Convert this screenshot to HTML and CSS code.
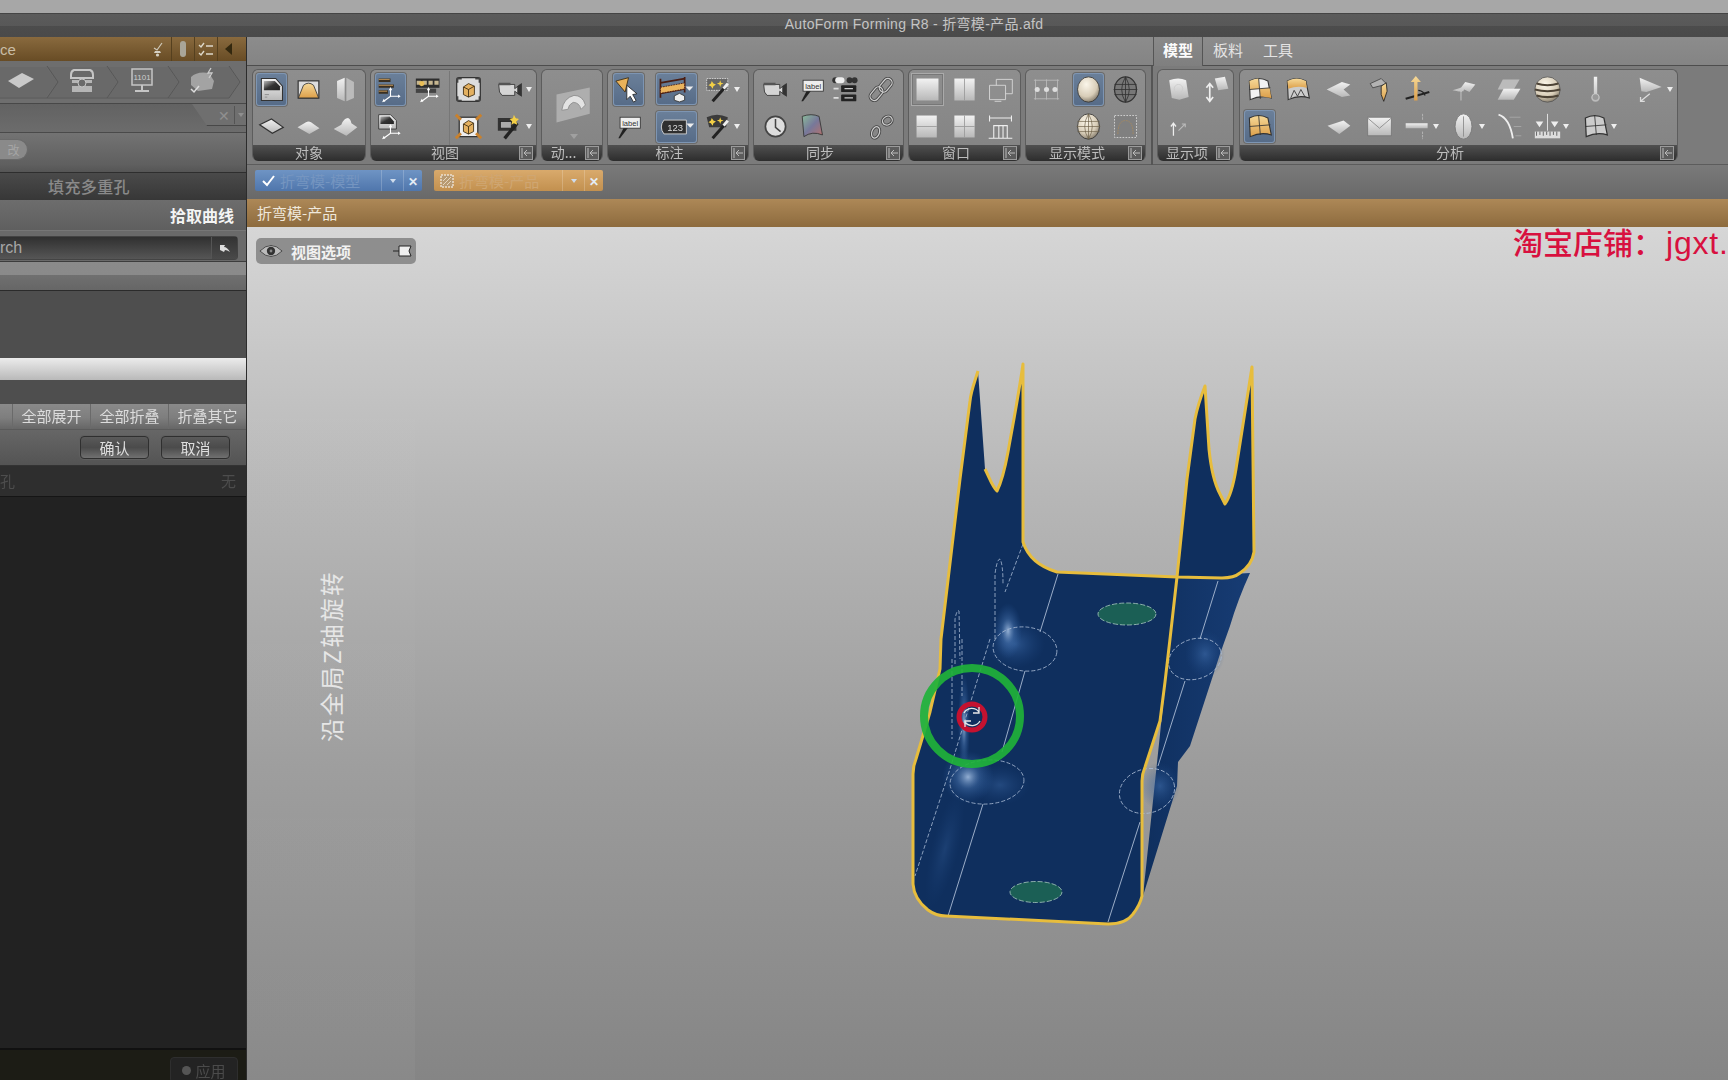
FILE: index.html
```html
<!DOCTYPE html>
<html lang="zh">
<head>
<meta charset="utf-8">
<title>AutoForm Forming R8</title>
<link rel="stylesheet" href="styles.css">
</head>
<body>
<svg class="defs" width="0" height="0" aria-hidden="true">
  <defs>
    <linearGradient id="gl" x1="0" y1="0" x2="0" y2="1"><stop offset="0" stop-color="#f2f2f2"/><stop offset="1" stop-color="#b8b8b8"/></linearGradient>
    <linearGradient id="gd" x1="0" y1="0" x2="1" y2="1"><stop offset="0" stop-color="#bbb"/><stop offset=".5" stop-color="#333"/><stop offset="1" stop-color="#222"/></linearGradient>
    <linearGradient id="go" x1="0" y1="0" x2="0" y2="1"><stop offset="0" stop-color="#f6d998"/><stop offset="1" stop-color="#dc9f4a"/></linearGradient>
    <linearGradient id="gk" x1="0" y1="0" x2="0" y2="1"><stop offset="0" stop-color="#666"/><stop offset="1" stop-color="#2a2a2a"/></linearGradient>
    <radialGradient id="gs" cx=".4" cy=".3" r=".8"><stop offset="0" stop-color="#fbf6ea"/><stop offset=".6" stop-color="#d8cdb8"/><stop offset="1" stop-color="#6d6455"/></radialGradient>
    <linearGradient id="gc" x1="0" y1="0" x2="1" y2="1"><stop offset="0" stop-color="#8bbd9a"/><stop offset=".5" stop-color="#77789a"/><stop offset="1" stop-color="#b8726a"/></linearGradient>

    <symbol id="sheet" viewBox="0 0 32 32"><path d="M4 3h17l8 9v17H4z" fill="url(#gl)" stroke="#333" stroke-width="1.2"/><path d="M7 6h13l6 6v5H7z" fill="url(#gd)"/><path d="M8 22h5M8 25h3" stroke="#888"/></symbol>
    <symbol id="die" viewBox="0 0 32 32"><rect x="3" y="5" width="26" height="22" fill="#3a3a3a"/><rect x="4.500" y="6.500" width="23" height="19" fill="#ddd"/><path d="M4 26l6-15q6-5 12 0l6 15z" fill="url(#go)" stroke="#333"/></symbol>
    <symbol id="book" viewBox="0 0 32 32"><path d="M15 2L6 6v20l9 4z" fill="url(#gl)"/><path d="M17 2l9 5v19l-9 4z" fill="#bbb"/></symbol>
    <symbol id="plate" viewBox="0 0 32 32"><path d="M2 14l14-7 14 10-13 7z" fill="url(#gl)" stroke="#333" stroke-width="1.400"/></symbol>
    <symbol id="dome" viewBox="0 0 32 32"><path d="M3 17l10-6q3-2 6 0l10 7-12 7z" fill="url(#gl)"/></symbol>
    <symbol id="hill" viewBox="0 0 32 32"><path d="M2 19l9-5q3-8 8-8 3 1 4 6l7 5-13 10z" fill="url(#gl)"/></symbol>
    <symbol id="axes" viewBox="0 0 32 32"><path d="M16 16v8M16 24l-8 6M16 24h10" fill="none" stroke="#fff" stroke-width="1.300"/><path d="M28 24l-3-2v4zM16 13l-2 4h4zM6 31l2-4 2 3z" fill="#fff"/></symbol>
    <symbol id="vcoord" viewBox="0 0 32 32"><path d="M2 3h14v4H2zM2 10h18v4H2zM2 17h11v4H2z" fill="#3a3022"/><path d="M2 4h13M2 11h17M2 18h10" stroke="#d7a45e"/><use href="#axes"/></symbol>
    <symbol id="vfilm" viewBox="0 0 32 32"><rect x="1" y="3" width="28" height="11" fill="#2d2d2d"/><path d="M2 8h26" stroke="#c6b690" stroke-width="5" stroke-dasharray="5 2"/><circle cx="8" cy="9" r="3" fill="#e8bd57"/><rect x="1" y="15" width="24" height="5" fill="#444"/><use href="#axes"/></symbol>
    <symbol id="vbox" viewBox="0 0 32 32"><rect x="2" y="2" width="28" height="28" rx="3" fill="#ddd" stroke="#333" stroke-width="1.500"/><path d="M10 13l6-4 7 3v10l-7 3-6-3z" fill="#e3b060" stroke="#3a2a10"/><path d="M16 16l7-4M16 16v9M16 16l-6-3" stroke="#3a2a10"/><path d="M3 8V3h5M24 3h5v5M3 24v5h5M24 29h5v-5" fill="none" stroke="#444" stroke-width="2"/></symbol>
    <symbol id="vboxo" viewBox="0 0 32 32"><rect x="5" y="5" width="22" height="23" fill="#eee" stroke="#333" stroke-width="1.500"/><path d="M10 13l6-4 6 3v10l-6 3-6-3z" fill="#e3b060" stroke="#3a2a10"/><path d="M16 16l6-4M16 16v9M16 16l-6-3" stroke="#3a2a10"/><path d="M1 2l6 6M31 2l-6 6M1 30l6-6M31 30l-6-6" stroke="#c9812c" stroke-width="3.500"/></symbol>
    <symbol id="cam" viewBox="0 0 32 32"><path d="M2 10h19v5l8-6v15l-8-6v5H6l-3-4z" fill="#d5d5d5" stroke="#333"/><path d="M2 8h14v3H2z" fill="#555"/><path d="M24 12l5-3v15l-5-3z" fill="#333"/></symbol>
    <symbol id="vsheet" viewBox="0 0 32 32"><path d="M2 2h14l7 7v10H2z" fill="url(#gl)" stroke="#333"/><path d="M4 4h11l5 6v3H4z" fill="url(#gd)"/><use href="#axes"/></symbol>
    <symbol id="camw" viewBox="0 0 32 32"><path d="M1 6h22v15H1z" fill="#333"/><rect x="4" y="10" width="13" height="8" fill="#aaa" stroke="#222"/><path d="M9 30L24 12" stroke="#222" stroke-width="4"/><path d="M20 2l2 4 4 1-3 3 1 4-4-2-3 2 1-4-3-3 4-1z" fill="#f3cf46"/></symbol>
    <symbol id="anim" viewBox="0 0 48 48"><path d="M4 12l38-8v30L4 44z" fill="#aeaeae"/><path d="M10 30q2-14 14-17 10 0 13 11l-5 5q-2-8-9-8-5 2-6 8z" fill="#e3e3e3" stroke="#8d8d8d"/></symbol>
    <symbol id="cursor" viewBox="0 0 32 32"><path d="M1 6l15-4-4 17z" fill="#e9b25a" stroke="#3a2a10"/><path d="M14 11v17l4-4 4 7 3-2-4-7 5-1z" fill="#fff" stroke="#222"/></symbol>
    <symbol id="lab" viewBox="0 0 32 32"><rect x="6" y="5" width="24" height="13" fill="#eee" stroke="#333"/><path d="M10 18L4 30l2 0 9-12z" fill="#222"/><text x="18" y="15" font-size="9" text-anchor="middle" font-family="Liberation Sans" fill="#333">label</text></symbol>
    <symbol id="ladder" viewBox="0 0 44 32"><path d="M4 4v22M32 2v18M4 9l28-5M4 21l28-5" stroke="#4a1d12" stroke-width="2" fill="none"/><path d="M4 14l28-5v7L4 21z" fill="#ebb45e" stroke="#4a1d12" stroke-dasharray="2 1"/><path d="M20 24l6-3 6 3v5l-6 2-6-2z" fill="#eee" stroke="#333"/><path d="M33 13h9l-4.500 5z" fill="#eee"/></symbol>
    <symbol id="n123" viewBox="0 0 44 32"><path d="M8 8h26v16H8q-6-8 0-16z" fill="#2f2f2f" stroke="#ddd"/><text x="21" y="21" font-size="11" text-anchor="middle" font-family="Liberation Sans" fill="#ddd">123</text><path d="M34 12h9l-4.500 5z" fill="#eee"/></symbol>
    <symbol id="wand" viewBox="0 0 32 32"><rect x="2" y="3" width="25" height="14" fill="#666" stroke="#ddd" stroke-dasharray="2 1"/><path d="M8 6l2 3 3 1-3 2-1 3-2-3-3-1 3-2zM18 5l1 3 3 1-3 1-1 3-1-3-3-1 3-1z" fill="#f3cf46"/><path d="M9 30l15-17" stroke="#222" stroke-width="3.500"/><path d="M22 15l5-6" stroke="#eee" stroke-width="3.500"/></symbol>
    <symbol id="wand2" viewBox="0 0 32 32"><path d="M2 5q12-6 25 0l-2 12H5z" fill="#3a3a3a"/><path d="M8 6l2 3 3 1-3 2-1 3-2-3-3-1 3-2zM18 5l1 3 3 1-3 1-1 3-1-3-3-1 3-1z" fill="#f3cf46"/><path d="M9 30l15-17" stroke="#222" stroke-width="3.500"/><path d="M22 15l5-6" stroke="#eee" stroke-width="3.500"/></symbol>
    <symbol id="tog" viewBox="0 0 32 32"><circle cx="5" cy="5" r="3.500" fill="#333"/><rect x="5" y="1.500" width="11" height="7" rx="3.500" fill="#eee"/><circle cx="22" cy="5" r="3.500" fill="#333"/><circle cx="28" cy="5" r="3.500" fill="#333"/><rect x="12" y="11" width="18" height="8" rx="1" fill="#222"/><rect x="12" y="22" width="18" height="8" rx="1" fill="#222"/><path d="M3 15h6M3 26h6" stroke="#ddd" stroke-width="2"/><path d="M16 15h10M16 26h10" stroke="#ccc" stroke-width="1.500"/></symbol>
    <symbol id="chain" viewBox="0 0 32 32"><g fill="none"><rect x="-5" y="-9" width="10" height="18" rx="5" transform="translate(10 21) rotate(40)" stroke="#444" stroke-width="3.500"/><rect x="-5" y="-9" width="10" height="18" rx="5" transform="translate(21 11) rotate(40)" stroke="#444" stroke-width="3.500"/><rect x="-5" y="-9" width="10" height="18" rx="5" transform="translate(10 21) rotate(40)" stroke="#ccc" stroke-width="1.500"/><rect x="-5" y="-9" width="10" height="18" rx="5" transform="translate(21 11) rotate(40)" stroke="#ccc" stroke-width="1.500"/></g></symbol>
    <symbol id="chainb" viewBox="0 0 32 32"><g fill="none"><ellipse cx="9" cy="23" rx="4.500" ry="7" transform="rotate(20 9 23)" stroke="#444" stroke-width="3.500"/><ellipse cx="23" cy="9" rx="6" ry="5" transform="rotate(-30 23 9)" stroke="#444" stroke-width="3.500"/><ellipse cx="9" cy="23" rx="4.500" ry="7" transform="rotate(20 9 23)" stroke="#ccc" stroke-width="1.500"/><ellipse cx="23" cy="9" rx="6" ry="5" transform="rotate(-30 23 9)" stroke="#ccc" stroke-width="1.500"/></g></symbol>
    <symbol id="clock" viewBox="0 0 32 32"><circle cx="16" cy="16" r="12" fill="#ddd" stroke="#444" stroke-width="2"/><path d="M16 7v10l6 5" fill="none" stroke="#444" stroke-width="1.800"/></symbol>
    <symbol id="csheet" viewBox="0 0 32 32"><path d="M5 4q11-4 20 0l4 22q-12-5-22 2z" fill="url(#gc)" stroke="#333"/></symbol>
    <symbol id="w1" viewBox="0 0 32 32"><rect x="3" y="3" width="26" height="26" fill="url(#gl)"/></symbol>
    <symbol id="w2" viewBox="0 0 32 32"><rect x="4" y="3" width="24" height="26" fill="url(#gl)"/><path d="M16 3v26" stroke="#999"/></symbol>
    <symbol id="w3" viewBox="0 0 32 32"><rect x="3" y="3" width="24" height="26" fill="url(#gl)"/><path d="M3 16h24" stroke="#999"/></symbol>
    <symbol id="w4" viewBox="0 0 32 32"><rect x="4" y="3" width="24" height="26" fill="url(#gl)"/><path d="M16 3v26M4 16h24" stroke="#999"/></symbol>
    <symbol id="wm" viewBox="0 0 32 32"><path d="M11 4h19v17H11z" fill="none" stroke="#ddd"/><path d="M3 11h19v17H3z" fill="#8e8e8e" stroke="#ddd"/><path d="M9 30h8" stroke="#ddd"/></symbol>
    <symbol id="wdim" viewBox="0 0 32 32"><path d="M3 3v7M29 3v7M3 6h26M8 30V15h16v15M14 15v15M19 15v15M2 30h28" fill="none" stroke="#eee" stroke-width="1.300"/></symbol>
    <symbol id="beads" viewBox="0 0 32 32"><path d="M3 4v24M16 4v24M29 4v24M1 5h30M1 27h30" stroke="#bbb" fill="none"/><circle cx="5" cy="16" r="3" fill="#ddd"/><circle cx="16" cy="16" r="3" fill="#ddd"/><circle cx="26" cy="16" r="3" fill="#ddd"/></symbol>
    <symbol id="ball" viewBox="0 0 32 32"><ellipse cx="16" cy="16" rx="13" ry="15" fill="url(#gs)" stroke="#333"/></symbol>
    <symbol id="ballw" viewBox="0 0 32 32"><ellipse cx="16" cy="16" rx="13" ry="15" fill="#777" stroke="#333" stroke-width="1.500"/><path d="M3 10h26M2 16h28M3 22h26M16 1v30M16 1q-9 15 0 30M16 1q9 15 0 30" fill="none" stroke="#333"/></symbol>
    <symbol id="ballf" viewBox="0 0 32 32"><ellipse cx="16" cy="16" rx="13" ry="15" fill="url(#gs)" stroke="#333"/><path d="M3 10h26M2 16h28M3 22h26M16 1v30M16 1q-9 15 0 30M16 1q9 15 0 30" fill="none" stroke="#6d5f48" stroke-width=".8"/></symbol>
    <symbol id="dots" viewBox="0 0 32 32"><rect x="3" y="3" width="26" height="26" fill="#808080" stroke="#ddd" stroke-dasharray="2 1.500"/><path d="M7 25q0-16 9-16t9 16" fill="none" stroke="#a98a5c" stroke-dasharray="2 1"/></symbol>
    <symbol id="page" viewBox="0 0 32 32"><path d="M5 5q11-4 20 0l3 20-11 3-9-2z" fill="url(#gl)"/><circle cx="16" cy="15" r="5" fill="none" stroke="#ccc"/></symbol>
    <symbol id="updown" viewBox="0 0 32 32"><path d="M14 3l12-2 4 14-12 2z" fill="url(#gl)"/><path d="M8 10v19M4 14l4-5 4 5M4 25l4 5 4-5" fill="none" stroke="#eee" stroke-width="2"/></symbol>
    <symbol id="arrs" viewBox="0 0 32 32"><path d="M10 27V13M7 16l3-4 3 4" fill="none" stroke="#eee" stroke-width="1.500"/><path d="M16 21l8-8M20 13h4v4" fill="none" stroke="#bbb" stroke-width="1.300"/></symbol>
    <symbol id="pat1" viewBox="0 0 32 32"><path d="M4 6q11-6 22 0l4 20q-12-4-25 2z" fill="#f2f2f2" stroke="#333" stroke-width="1.300"/><path d="M4 6q6-3 11-3l1 12-11 1zM16 15l12-1 2 12-13-2z" fill="url(#go)"/><path d="M15 3l2 24M4 16l25-2" stroke="#333"/></symbol>
    <symbol id="pat2" viewBox="0 0 32 32"><path d="M4 6q11-6 22 0l4 20q-12-4-25 2z" fill="#ccc" stroke="#333" stroke-width="1.300"/><path d="M4 6q11-6 22 0l1 8q-11-3-22 1z" fill="url(#go)"/><path d="M8 26l4-9 4 7 4-8 5 9" fill="none" stroke="#333"/></symbol>
    <symbol id="pat3" viewBox="0 0 32 32"><path d="M4 6q11-6 22 0l4 20q-12-4-25 2z" fill="url(#go)" stroke="#333" stroke-width="1.300"/><path d="M15 3l2 23M4 16l25-2" stroke="#333"/></symbol>
    <symbol id="fold" viewBox="0 0 32 32"><path d="M2 16L20 7l10 3-8 6 8 7-10 2z" fill="url(#gl)"/></symbol>
    <symbol id="flat" viewBox="0 0 32 32"><path d="M3 15l19-6 8 6-13 10z" fill="url(#gl)"/></symbol>
    <symbol id="bend" viewBox="0 0 32 32"><path d="M5 9L18 3l5 5v2L8 14z" fill="#b3b3b3" stroke="#444"/><path d="M18 12l6-4 1 10-4 12-3-8z" fill="url(#go)" stroke="#222"/></symbol>
    <symbol id="angle" viewBox="0 0 32 32"><path d="M2 27L30 19" stroke="#222" stroke-width="2.500"/><path d="M12 7l-4 0 6-7 6 7h-4v22h-4z" fill="url(#go)"/><path d="M17 17a10 10 0 0 1 8 6" fill="none" stroke="#222" stroke-width="1.500"/></symbol>
    <symbol id="sarrow" viewBox="0 0 32 32"><path d="M3 17l10-3 5-7 12 3-7 9-6-3-3 3z" fill="url(#gl)"/><path d="M13 29V15M10 18l3-4 3 4" stroke="#ccc" fill="none"/></symbol>
    <symbol id="slay" viewBox="0 0 32 32"><path d="M8 4h20l-7 12H2z" fill="#bbb"/><path d="M9 15h20l-8 13H2z" fill="url(#gl)"/></symbol>
    <symbol id="stripe" viewBox="0 0 32 32"><ellipse cx="16" cy="16" rx="15" ry="15" fill="url(#gs)" stroke="#555"/><path d="M3 9q13 4 26 0M1 16q15 4 30 0M3 23q13 4 26 0" fill="none" stroke="#4d4336" stroke-width="2.500"/></symbol>
    <symbol id="thermo" viewBox="0 0 32 32"><path d="M14 1h4v20a5 5 0 1 1-4 0z" fill="url(#gl)"/><circle cx="16" cy="25" r="3.500" fill="#999"/></symbol>
    <symbol id="flagd" viewBox="0 0 32 32"><path d="M2 2l26 11-18 6-6-1z" fill="url(#gl)"/><path d="M14 21L3 30M3 25v5h5" stroke="#ddd" fill="none" stroke-width="1.500"/></symbol>
    <symbol id="mail" viewBox="0 0 32 32"><rect x="2" y="5" width="28" height="22" fill="url(#gl)" stroke="#777"/><path d="M2 6l14 12L30 6" fill="none" stroke="#888"/></symbol>
    <symbol id="sect" viewBox="0 0 32 32"><path d="M2 12h26v6H2z" fill="url(#gl)"/><path d="M2 20h26" stroke="#888"/><path d="M22 1v8M22 22v9" stroke="#bbb" stroke-dasharray="3 1"/></symbol>
    <symbol id="oval" viewBox="0 0 32 32"><ellipse cx="16" cy="16" rx="10" ry="15" fill="url(#gl)" stroke="#777"/><path d="M16 4v24" stroke="#888"/></symbol>
    <symbol id="curve" viewBox="0 0 32 32"><path d="M3 2q13 4 17 28" fill="none" stroke="#eee" stroke-width="2.200"/><path d="M16 5h13M21 16h9M23 27h7" stroke="#aaa"/></symbol>
    <symbol id="ruler" viewBox="0 0 32 32"><rect x="1" y="22" width="30" height="8" fill="#ddd"/><path d="M3 22v5M7 22v4M11 22v5M15 22v4M19 22v5M23 22v4M27 22v5" stroke="#555"/><path d="M2 10h9l-4.500 7zM20 10h9l-4.500 7z" fill="#eee"/><path d="M16 1v20" stroke="#eee"/></symbol>
    <symbol id="gridp" viewBox="0 0 32 32"><path d="M4 6q11-6 22 0l4 20q-12-4-25 2z" fill="#ccc" stroke="#333" stroke-width="1.500"/><path d="M15 3l2 23M4 16l25-2" stroke="#333"/></symbol>

    <symbol id="exp" viewBox="0 0 14 14"><rect x=".5" y=".5" width="13" height="13" fill="#5c5c5c" stroke="#9a9a9a"/><path d="M12 7H6M8 4L5 7l3 3M3 2v10" fill="none" stroke="#bbb"/></symbol>
    <symbol id="eye" viewBox="0 0 26 16"><path d="M1 8q12-12 24 0q-12 12-24 0z" fill="#bbb" stroke="#444"/><circle cx="13" cy="8" r="4.500" fill="#333"/><circle cx="13" cy="8" r="1.500" fill="#888"/></symbol>
    <symbol id="pin" viewBox="0 0 20 14"><path d="M1 7h6" stroke="#222"/><path d="M7 2h12l-2 5 2 5H7z" fill="#eee" stroke="#222"/></symbol>
  </defs>
</svg>

<div class="app">
  <div class="strip"></div>
  <header class="title">AutoForm Forming R8 - 折弯模-产品.afd</header>
  <div class="work">
    <aside class="left">
      <div class="lhead">
        <span class="lhead-t">ce</span>
        <span class="lh-tools">
          <svg class="lh-i" viewBox="0 0 16 16"><path d="M4 7l3 2 5-7" stroke="#cfc9ba" fill="none" stroke-width="1.200"/><path d="M5 10h5l1 2H4z" fill="#d5d0c3"/><circle cx="7.500" cy="14" r="1.600" fill="#d5d0c3"/></svg>
          <span class="lh-cell"><svg class="lh-g" viewBox="0 0 16 16"><rect x="5" y="0" width="6" height="16" rx="3" fill="#a9a598"/></svg></span>
          <span class="lh-cell"><svg class="lh-g" viewBox="0 0 16 16"><path d="M1 4l2 2 3-4M1 12l2 2 3-4M8 5h7M8 13h7" stroke="#ddd8ca" fill="none" stroke-width="1.400"/></svg></span>
          <span class="lh-cell"><svg class="lh-g" viewBox="0 0 16 16"><path d="M11 2L4 8l7 6z" fill="#33280f"/></svg></span>
        </span>
      </div>
      <div class="crumbs">
        <svg class="crumb-svg" viewBox="0 0 247 35">
          <path d="M-2 2h48l11 15-11 15H-2z" fill="#696969"/>
          <path d="M47 2h60l10 15-10 15H47l10-15z" fill="#696969"/>
          <path d="M108 2h60l10 15-10 15h-60l10-15z" fill="#696969"/>
          <path d="M169 2h60l10 15-10 15h-60l10-15z" fill="#696969"/>
          <path d="M47 1l11 16-11 16M107 1l11 16-11 16M168 1l11 16-11 16M229 1l11 16-11 16" fill="none" stroke="#575757"/>
          <path d="M-2 33H229" stroke="#595959"/>
          <path d="M8 16l14-8 12 6-15 9z" fill="#c9c9c9"/>
          <path d="M74 5h16q3 1 3 5v3H71v-3q0-4 3-5z" fill="none" stroke="#c5c5c5" stroke-width="2"/><path d="M72 15h20v3H72zM72 21h20v6H72z" fill="#b5b5b5"/><circle cx="82" cy="18" r="4" fill="#6a6a6a" stroke="#c5c5c5"/>
          <rect x="132" y="4" width="20" height="16" fill="#6f6f6f" stroke="#c5c5c5" stroke-width="1.500"/><path d="M135 26h14M142 20v5" stroke="#c5c5c5" stroke-width="2"/><text x="142" y="15" font-size="8" text-anchor="middle" font-family="Liberation Sans" fill="#ccc">1101</text>
          <path d="M191 12q6-6 18-4l5 8-2 8-14 2-7-6z" fill="#a3a3a3"/><path d="M211 3l-3 5h4l-3 5" stroke="#ccc" fill="none" stroke-width="1.300"/><path d="M191 24l3 3 5-6" stroke="#ddd" fill="none" stroke-width="1.500"/>
        </svg>
      </div>
      <div class="xrow">
        <span class="xtab"><span class="xtab-x">✕</span><span class="xtab-c"></span></span>
      </div>
      <div class="pillrow"><span class="pill">改</span></div>
      <div class="drow">填充多重孔</div>
      <div class="pick">拾取曲线</div>
      <div class="searchrow">
        <div class="search"><span class="search-t">rch</span>
          <span class="search-b"><svg class="search-i" viewBox="0 0 14 12"><path d="M2 8V3h5L6 5q3 0 6 5-3-2-5-2l-1 2z" fill="#ddd"/></svg></span>
        </div>
      </div>
      <div class="listhead"></div>
      <div class="lgap1"></div>
      <div class="lwhite"></div>
      <div class="lgap2"></div>
      <div class="ltabs">
        <span class="lt lt0"></span><span class="lt">全部展开</span><span class="lt">全部折叠</span><span class="lt">折叠其它</span>
      </div>
      <div class="lbtns"><button class="btn">确认</button><button class="btn">取消</button></div>
      <div class="lnone"><span>孔</span><span>无</span></div>
      <div class="lblack"></div>
      <div class="lbottom"><span class="apply"><i class="dot"></i>应用</span></div>
    </aside>

    <main class="right">
      <div class="tabstrip">
        <span class="rt rt-on">模型</span><span class="rt">板料</span><span class="rt">工具</span>
      </div>
      <div class="ribbon">
        <section class="grp g1">
          <div class="body">
            <span class="ic on"><svg class="i"><use href="#sheet"/></svg></span>
            <span class="ic"><svg class="i"><use href="#die"/></svg></span>
            <span class="ic"><svg class="i"><use href="#book"/></svg></span>
            <span class="ic"><svg class="i"><use href="#plate"/></svg></span>
            <span class="ic"><svg class="i"><use href="#dome"/></svg></span>
            <span class="ic"><svg class="i"><use href="#hill"/></svg></span>
          </div>
          <div class="lbl"><span>对象</span></div>
        </section>
        <section class="grp g2">
          <div class="body">
            <span class="ic on"><svg class="i"><use href="#vcoord"/></svg></span>
            <span class="ic"><svg class="i"><use href="#vfilm"/></svg></span>
            <span class="sep r2"></span>
            <span class="ic"><svg class="i"><use href="#vbox"/></svg></span>
            <span class="ic dd"><svg class="i"><use href="#cam"/></svg></span>
            <span class="ic"><svg class="i"><use href="#vsheet"/></svg></span>
            <span></span>
            <span class="ic"><svg class="i"><use href="#vboxo"/></svg></span>
            <span class="ic dd"><svg class="i"><use href="#camw"/></svg></span>
          </div>
          <div class="lbl xp"><span>视图</span><svg class="exp"><use href="#exp"/></svg></div>
        </section>
        <section class="grp g3">
          <div class="body anim"><svg class="i-big"><use href="#anim"/></svg><i class="caret dim"></i></div>
          <div class="lbl xp"><span>动...</span><svg class="exp"><use href="#exp"/></svg></div>
        </section>
        <section class="grp g4">
          <div class="body">
            <span class="ic on"><svg class="i"><use href="#cursor"/></svg></span>
            <span class="ic on wide"><svg class="iw"><use href="#ladder"/></svg></span>
            <span class="ic dd"><svg class="i"><use href="#wand"/></svg></span>
            <span class="ic"><svg class="i"><use href="#lab"/></svg></span>
            <span class="ic on wide"><svg class="iw"><use href="#n123"/></svg></span>
            <span class="ic dd"><svg class="i"><use href="#wand2"/></svg></span>
          </div>
          <div class="lbl xp"><span>标注</span><svg class="exp"><use href="#exp"/></svg></div>
        </section>
        <section class="grp g5">
          <div class="body">
            <span class="ic"><svg class="i"><use href="#cam"/></svg></span>
            <span class="ic"><svg class="i"><use href="#lab"/></svg></span>
            <span class="ic"><svg class="i"><use href="#tog"/></svg></span>
            <span class="ic"><svg class="i"><use href="#chain"/></svg></span>
            <span class="ic"><svg class="i"><use href="#clock"/></svg></span>
            <span class="ic"><svg class="i"><use href="#csheet"/></svg></span>
            <span></span>
            <span class="ic"><svg class="i"><use href="#chainb"/></svg></span>
          </div>
          <div class="lbl xp"><span>同步</span><svg class="exp"><use href="#exp"/></svg></div>
        </section>
        <section class="grp g6">
          <div class="body">
            <span class="ic frame"><svg class="i"><use href="#w1"/></svg></span>
            <span class="ic"><svg class="i"><use href="#w2"/></svg></span>
            <span class="ic"><svg class="i"><use href="#wm"/></svg></span>
            <span class="ic"><svg class="i"><use href="#w3"/></svg></span>
            <span class="ic"><svg class="i"><use href="#w4"/></svg></span>
            <span class="ic"><svg class="i"><use href="#wdim"/></svg></span>
          </div>
          <div class="lbl xp"><span>窗口</span><svg class="exp"><use href="#exp"/></svg></div>
        </section>
        <section class="grp g7">
          <div class="body">
            <span class="ic"><svg class="i"><use href="#beads"/></svg></span>
            <span class="ic on"><svg class="i"><use href="#ball"/></svg></span>
            <span class="ic"><svg class="i"><use href="#ballw"/></svg></span>
            <span></span>
            <span class="ic"><svg class="i"><use href="#ballf"/></svg></span>
            <span class="ic"><svg class="i"><use href="#dots"/></svg></span>
          </div>
          <div class="lbl xp"><span>显示模式</span><svg class="exp"><use href="#exp"/></svg></div>
        </section>
        <div class="rsep"></div>
        <section class="grp g8">
          <div class="body">
            <span class="ic"><svg class="i"><use href="#page"/></svg></span>
            <span class="ic"><svg class="i"><use href="#updown"/></svg></span>
            <span class="ic"><svg class="i"><use href="#arrs"/></svg></span>
          </div>
          <div class="lbl xp"><span>显示项</span><svg class="exp"><use href="#exp"/></svg></div>
        </section>
        <section class="grp g9">
          <div class="body">
            <span class="ic"><svg class="i"><use href="#pat1"/></svg></span>
            <span class="ic"><svg class="i"><use href="#pat2"/></svg></span>
            <span class="ic"><svg class="i"><use href="#fold"/></svg></span>
            <span class="ic"><svg class="i"><use href="#bend"/></svg></span>
            <span class="ic"><svg class="i"><use href="#angle"/></svg></span>
            <span class="ic"><svg class="i"><use href="#sarrow"/></svg></span>
            <span class="ic"><svg class="i"><use href="#slay"/></svg></span>
            <span class="ic"><svg class="i"><use href="#stripe"/></svg></span>
            <span class="ic"><svg class="i"><use href="#thermo"/></svg></span>
            <span class="ic dd"><svg class="i"><use href="#flagd"/></svg></span>
            <span class="ic on"><svg class="i"><use href="#pat3"/></svg></span>
            <span></span>
            <span class="ic"><svg class="i"><use href="#flat"/></svg></span>
            <span class="ic"><svg class="i"><use href="#mail"/></svg></span>
            <span class="ic dd"><svg class="i"><use href="#sect"/></svg></span>
            <span class="ic dd"><svg class="i"><use href="#oval"/></svg></span>
            <span class="ic"><svg class="i"><use href="#curve"/></svg></span>
            <span class="ic dd"><svg class="i"><use href="#ruler"/></svg></span>
            <span class="ic dd"><svg class="i"><use href="#gridp"/></svg></span>
            <span></span>
          </div>
          <div class="lbl xp"><span>分析</span><svg class="exp"><use href="#exp"/></svg></div>
        </section>
      </div>
      <div class="doctabs">
        <span class="dt dt-b"><svg class="dt-i" viewBox="0 0 14 14"><path d="M2 7l4 4 7-9" fill="none" stroke="#fff" stroke-width="2"/></svg><span class="dt-t">折弯模-模型</span><i class="dt-c"></i><span class="dt-x">✕</span></span>
        <span class="dt dt-o"><svg class="dt-i" viewBox="0 0 14 14"><rect x="1" y="1" width="12" height="12" fill="#b89a72" stroke="#fff" stroke-dasharray="2 1"/><path d="M3 11l8-8M3 7l4-4M7 11l4-4" stroke="#e5d6bd"/></svg><span class="dt-t">折弯模-产品</span><i class="dt-c"></i><span class="dt-x">✕</span></span>
      </div>
      <div class="vhead">折弯模-产品</div>
      <div class="viewport">
        <div class="vstrip">
          <div class="vopts"><svg class="vo-eye"><use href="#eye"/></svg><span class="vo-t">视图选项</span><svg class="vo-pin"><use href="#pin"/></svg></div>
        </div>
        <div class="vtext">沿全局Z轴旋转</div>
        <div class="shop">淘宝店铺：<span class="shop-l">jgxt.taobao.com</span></div>
        <svg class="part" viewBox="247 228 1481 852">
          <defs>
            <radialGradient id="hl"><stop offset="0" stop-color="#a9c4e6" stop-opacity=".85"/><stop offset=".45" stop-color="#4b78b4" stop-opacity=".45"/><stop offset="1" stop-color="#2a5a9c" stop-opacity="0"/></radialGradient>
            <radialGradient id="hs"><stop offset="0" stop-color="#3f6dab" stop-opacity=".6"/><stop offset="1" stop-color="#1f4a86" stop-opacity="0"/></radialGradient>
            <linearGradient id="fl" x1="0" y1="0" x2="1" y2="0"><stop offset="0" stop-color="#0f2f5e"/><stop offset="1" stop-color="#173c74"/></linearGradient>
          </defs>
          <path fill="url(#fl)" d="M1170 640L1177 578 1250 574Q1238 600 1230 627L1220 655 1190 747 1178 763 1177 787 1143 897z"/>
          <path class="blue" d="M978 372C974 385 971 392 970 402L960 480 941 640 940 670 930 713 916 760Q913 767 913 775L913 885Q914 900 928 911 936 917 946 917L1108 925Q1126 925 1133 915 1140 906 1142 897L1142 782Q1142 775 1145 768L1160 722 1165 683 1170 640 1177 578 1057 573Q1030 565 1023 543L1023 365C1018 400 1012 430 1008 453 1003 480 997 492 997 492 992 487 990 480 985 470 983 445 981 420z"/>
          <path class="blue" d="M1177 578L1187 480 1195 420Q1198 405 1205 387L1209 450Q1212 480 1220 495L1225 505Q1232 495 1236 470L1252 368 1254 553Q1252 566 1240 574 1234 579 1222 579z"/>
          <ellipse cx="1015" cy="645" rx="30" ry="24" fill="url(#hs)"/>
          <ellipse cx="1008" cy="632" rx="14" ry="28" fill="url(#hl)"/>
          <ellipse cx="968" cy="778" rx="26" ry="26" fill="url(#hl)"/>
          <ellipse cx="964" cy="725" rx="6" ry="50" fill="url(#hl)"/>
          <ellipse cx="1000" cy="786" rx="30" ry="20" fill="url(#hs)" opacity=".7"/>
          <ellipse cx="1160" cy="787" rx="20" ry="24" fill="url(#hs)"/>
          <ellipse cx="1205" cy="655" rx="20" ry="24" fill="url(#hs)"/>
          <ellipse cx="945" cy="850" rx="14" ry="60" fill="url(#hs)" opacity=".45" transform="rotate(14 945 850)"/>
          <ellipse cx="1127" cy="615" rx="29" ry="11" class="hole"/>
          <ellipse cx="1036" cy="893" rx="26" ry="10.500" class="hole"/>
          <g class="ln">
            <path d="M1058 575L1040 633M1025 672L1002 753M983 805L948 917M1218 582L1200 640M1185 682L1158 767M1140 823L1108 923"/>
          </g>
          <g class="dash">
            <path d="M1023 545L1005 593M990 640L950 770 915 877"/>
            <ellipse cx="1025" cy="650" rx="32" ry="22" transform="rotate(6 1025 650)"/>
            <ellipse cx="987" cy="783" rx="37" ry="22" transform="rotate(-4 987 783)"/>
            <ellipse cx="1195" cy="660" rx="27" ry="20" transform="rotate(-18 1195 660)"/>
            <ellipse cx="1147" cy="792" rx="28" ry="22" transform="rotate(-16 1147 792)"/>
            <path d="M995 640V575Q997 560 1000 560 1003 565 1003 585M955 665V620Q957 610 959 612L960 660M952 660V740M962 640V697"/>
          </g>
          <g class="edge">
            <path d="M978 372C974 385 971 392 970 402L960 480 941 640 940 670 930 713 916 760Q913 767 913 775L913 885Q914 900 928 911 936 917 946 917L1108 925Q1126 925 1133 915 1140 906 1142 897L1142 782Q1142 775 1145 768L1160 722 1165 683 1170 640 1177 578 1057 573Q1030 565 1023 543L1023 365C1018 400 1012 430 1008 453 1003 480 997 492 997 492 992 487 990 480 985 470 983 445 981 420z"/>
            <path d="M1177 578L1187 480 1195 420Q1198 405 1205 387L1209 450Q1212 480 1220 495L1225 505Q1232 495 1236 470L1252 368 1254 553Q1252 566 1240 574 1234 579 1222 579z"/>
          </g>
          <circle cx="972" cy="717" r="48" class="gring"/>
          <circle cx="972" cy="718" r="13" class="rring"/>
          <path class="rot" d="M964 714a9 9 0 0 1 15-1M980 722a9 9 0 0 1-15 1M979 708v6h-6M965 728v-6h6"/>
        </svg>
      </div>
    </main>
  </div>
</div>
</body>
</html>
```

FILE: styles.css
```css
* { box-sizing: border-box; }
html, body { margin: 0; padding: 0; background: #777; }
body { font-family: "Noto Sans CJK SC", "Liberation Sans", sans-serif; overflow: hidden; }
.defs { position: absolute; }
.app { width: 1728px; height: 1080px; display: flex; flex-direction: column; overflow: hidden; filter: blur(.55px); }

.strip { height: 13px; background: #a7a7a7; flex: none; }
.title {
  height: 24px; flex: none; display: flex; align-items: center; justify-content: center;
  padding: 0 0 3px 100px; color: #c4c4c4; font-size: 14px; letter-spacing: .3px; line-height: 20px;
  font-family: "Liberation Sans", "Noto Sans CJK SC", sans-serif;
  background: linear-gradient(#5b5b5b 0, #585858 50%, #4c4c4c 51%, #4a4a4a 100%);
  border-top: 1px solid #454545;
}
.work { flex: 1; display: flex; min-height: 0; }

/* left panel */
.left { width: 247px; flex: none; display: flex; flex-direction: column; background: #222; border-right: 1px solid #2c2c2c; }
.lhead { height: 24px; flex: none; display: flex; align-items: center; justify-content: space-between; background: linear-gradient(#896a3e, #684c25); color: #c9bda6; font-size: 15px; }
.lhead-t { font-family: "Liberation Sans", sans-serif; }
.lh-tools { display: flex; align-items: center; padding-right: 6px; height: 100%; }
.lh-i { width: 16px; height: 20px; margin-right: 5px; }
.lh-cell { width: 23px; height: 100%; border-left: 1px solid #55401f; display: flex; align-items: center; justify-content: center; }
.lh-g { width: 16px; height: 18px; }
.crumbs { height: 42px; flex: none; background: #6e6e6e; padding-top: 4px; }
.crumb-svg { display: block; width: 247px; height: 35px; }
.xrow { height: 30px; flex: none; background: linear-gradient(#626262, #6c6c6c); border-top: 1px solid #484848; border-bottom: 1px solid #4a4a4a; display: flex; justify-content: flex-end; }
.xtab { width: 54px; height: 22px; display: flex; align-items: center; justify-content: flex-end; background: #6f6f6f; border-bottom: 1px solid #484848; clip-path: polygon(0 0, 100% 0, 100% 100%, 28% 100%); }
.xtab-x { color: #8f8f8f; font-size: 14px; width: 21px; text-align: center; border-right: 1px solid #545454; line-height: 18px; }
.xtab-c { width: 11px; height: 6px; }
.xtab-c::after { content: ""; display: block; width: 0; margin: 1px auto; border: 3px solid transparent; border-top: 4px solid #8f8f8f; }
.pillrow { height: 39px; flex: none; background: linear-gradient(#737373 0, #5f5f5f 82%, #5f5f5f 82%, #555 100%); padding-top: 6px; }
.pill { display: block; width: 28px; height: 21px; border-radius: 0 11px 11px 0; background: #8a8a8a; border: 1px solid #6a6a6a; border-left: 0; color: #a5a5a5; font-size: 12px; line-height: 19px; text-align: center; }
.drow { height: 28px; flex: none; background: linear-gradient(#4a4a4a, #373737); border-top: 1px solid #2e2e2e; color: #8a8a8a; font-size: 16px; line-height: 27px; text-align: left; padding-left: 48px; letter-spacing: .4px; font-weight: 500; }
.pick { height: 30px; flex: none; background: linear-gradient(#6d6d6d, #5f5f5f); color: #f4f4f4; font-size: 16px; font-weight: 700; line-height: 31px; text-align: right; padding-right: 12px; }
.searchrow { height: 32px; flex: none; background: #6a6a6a; padding: 5px 8px 2px 0; border-top: 1px solid #777; border-bottom: 1px solid #3d3d3d; }
.search { height: 24px; border-radius: 0 4px 4px 0; background: linear-gradient(#303030, #565656); color: #a8a8a8; font-size: 16px; line-height: 22px; display: flex; justify-content: space-between; border: 1px solid #444; border-left: 0; }
.search-t { font-family: "Liberation Sans", sans-serif; }
.search-b { width: 26px; background: linear-gradient(#333, #4a4a4a); border-left: 1px solid #555; display: flex; align-items: center; justify-content: center; }
.search-i { width: 14px; height: 12px; }
.listhead { height: 29px; flex: none; background: linear-gradient(#8b8b8b 0, #8a8a8a 45%, #707070 46%, #666 100%); border-bottom: 1px solid #2b2b2b; }
.lgap1 { height: 67px; flex: none; background: #4e4e4e; }
.lwhite { height: 22px; flex: none; background: linear-gradient(#ececec, #b9b9b9); }
.lgap2 { height: 24px; flex: none; background: #4e4e4e; }
.ltabs { height: 25px; flex: none; display: flex; justify-content: flex-end; background: linear-gradient(#8a8a8a 0, #7e7e7e 55%, #666 100%); color: #dcdcdc; font-size: 15px; }
.lt { width: 78px; text-align: center; line-height: 24px; border-left: 1px solid #6a6a6a; white-space: nowrap; }
.lt0 { flex: 1; width: auto; border-left: 0; }
.lbtns { height: 37px; flex: none; background: linear-gradient(#666, #545454); display: flex; justify-content: flex-end; gap: 12px; align-items: center; padding-right: 16px; border-top: 1px solid #5a5a5a; border-bottom: 1px solid #333; }
.btn { width: 69px; height: 23px; padding: 0; font: 15px/20px "Noto Sans CJK SC", sans-serif; color: #dedede; background: linear-gradient(#5a5a5a, #4b4b4b 50%, #707070); border: 1px solid #2f2f2f; border-radius: 4px; box-shadow: 0 0 0 1px #5f5f5f; }
.lnone { height: 31px; flex: none; background: #2e2e2e; border-bottom: 1px solid #151515; color: #4d4d4d; font-size: 15px; line-height: 30px; display: flex; justify-content: space-between; padding-right: 10px; }
.lblack { flex: 1; background: #222; }
.lbottom { height: 32px; flex: none; background: #1c1c15; border-top: 2px solid #111; display: flex; justify-content: flex-end; padding: 7px 8px 0 0; }
.apply { width: 68px; height: 26px; border: 1px solid #2e2e2e; border-radius: 4px; background: #232323; color: #4b4b4b; font-size: 15px; line-height: 21px; display: flex; align-items: center; justify-content: center; gap: 4px; }
.dot { width: 9px; height: 9px; border-radius: 50%; background: #555; }

/* right */
.right { flex: 1; min-width: 0; display: flex; flex-direction: column; }
.tabstrip { height: 28px; flex: none; background: linear-gradient(#8c8c8c, #848484); padding-left: 906px; display: flex; align-items: flex-end; color: #e4e4e4; font-size: 15px; position: relative; z-index: 1; }
.rt { height: 28px; line-height: 26px; width: 50px; text-align: center; }
.rt-on { font-weight: 700; color: #fbfbfb; height: 29px; margin-bottom: -1px; background: linear-gradient(#8a8a8a, #7f7f7f); border-left: 1px solid #555; border-right: 1px solid #555; }
.ribbon { height: 100px; flex: none; background: #7b7b7b; border-top: 1px solid #4d4d4d; border-bottom: 1px solid #5c5c5c; padding: 3px 0 0 5px; display: flex; gap: 4px; }
.grp { height: 92px; flex: none; border-radius: 6px; background: linear-gradient(#8e8e8e, #838383); border: 1px solid #5d5d5d; border-width: 1px 1px 0; display: flex; flex-direction: column; overflow: hidden; }
.body { height: 75px; flex: none; display: grid; grid-template-rows: 38px 37px; place-items: center; }
.lbl { flex: 1; background: linear-gradient(#505050, #2d2d2d); color: #bdbdbd; font-size: 14px; line-height: 14px; display: flex; justify-content: center; align-items: flex-start; }
.lbl.xp { justify-content: space-between; padding: 0 3px 0 0; }
.lbl.xp span { flex: 1; text-align: center; white-space: nowrap; }
.exp { width: 14px; height: 14px; flex: none; margin-top: 1px; }

.g1 { width: 114px; } .g1 .body { grid-template-columns: repeat(3, 37px); }
.g2 { width: 167px; } .g2 .body { grid-template-columns: 38px 38px 4px 34px 50px; }
.g3 { width: 62px; } .g3 .body { display: flex; flex-direction: column; align-items: center; padding: 14px 0 0 4px; gap: 8px; }
.g4 { width: 142px; } .g4 .body { grid-template-columns: 41px 54px 30px; }
.g5 { width: 151px; } .g5 .body { grid-template-columns: 42px 30px 36px 38px; }
.g6 { width: 113px; } .g6 .body { grid-template-columns: 37px 36px 37px; }
.g7 { width: 121px; } .g7 .body { grid-template-columns: 40px 44px 30px; }
.rsep { width: 2px; height: 100px; flex: none; margin: -3px 0 0 1px; background: #555; }
.g8 { width: 77px; } .g8 .body { grid-template-columns: 40px 36px; }
.g9 { width: 439px; margin-left: 1px; } .g9 .body { grid-template-columns: 38px 38px 44px 38px 38px 54px 38px 38px 58px 54px; }

.ic { display: flex; align-items: center; justify-content: center; gap: 2px; }
.i { width: 27px; height: 27px; display: block; }
.iw { width: 38px; height: 28px; display: block; }
.on { width: 31px; height: 33px; background: linear-gradient(#6a7f99, #576c88); border: 1px solid #7d95b3; border-radius: 3px; box-shadow: 0 0 0 1px #6b6b6b; }
.on.wide { width: 41px; height: 32px; }
.frame { width: 33px; height: 33px; border: 1px solid #aaa; box-shadow: inset 0 0 0 1px #777; }
.dd::after { content: ""; width: 0; height: 0; border: 3.500px solid transparent; border-top: 5px solid #eee; border-bottom: 0; margin-right: -9px; }
.sep { width: 1px; height: 74px; background: #777; grid-row: 1 / span 2; grid-column: 3; }
.i-big { width: 42px; height: 42px; }
.caret { width: 0; height: 0; border: 4px solid transparent; border-top: 5px solid #a0a0a0; border-bottom: 0; }

/* doc tabs */
.doctabs { height: 34px; flex: none; background: linear-gradient(#7a7a7a, #696969); display: flex; gap: 12px; padding: 5px 0 0 8px; }
.dt { height: 21px; display: flex; align-items: center; font-size: 15px; border-radius: 2px; }
.dt-b { width: 167px; background: linear-gradient(#6f94c4, #4f76ac); color: #7595c0; }
.dt-o { width: 169px; background: linear-gradient(#d9aa6c, #c2904f); color: #cfa672; }
.dt-i { width: 14px; height: 14px; margin: 0 5px 0 6px; flex: none; }
.dt-t { flex: 1; white-space: nowrap; }
.dt-c { width: 22px; height: 21px; border-left: 1px solid rgba(255,255,255,.2); display: flex; align-items: center; justify-content: center; }
.dt-c::after { content: ""; border: 3px solid transparent; border-top: 4px solid #cfdcec; border-bottom: 0; }
.dt-x { width: 19px; height: 21px; border-left: 1px solid rgba(255,255,255,.2); color: #e4ecf5; font-size: 12px; line-height: 21px; text-align: center; font-weight: 700; }
.vhead { height: 28px; flex: none; background: linear-gradient(#ad8857, #8d6b3e); color: #efe8dc; font-size: 15px; line-height: 27px; padding-left: 10px; }

/* viewport */
.viewport { flex: 1; position: relative; background: linear-gradient(#d6d6d6 0, #b6b6b6 32%, #9d9d9d 62%, #858585 100%); overflow: hidden; }
.vstrip { width: 168px; height: 100%; background: linear-gradient(rgba(255,255,255,0) 0, rgba(255,255,255,.035) 100%); padding: 11px 0 0 9px; }
.vopts { width: 160px; height: 26px; background: #8e8e8e; border-radius: 5px; display: flex; align-items: center; padding: 0 4px 0 3px; color: #f2f2f2; font-weight: 700; font-size: 15px; }
.vo-eye { width: 24px; height: 16px; flex: none; }
.vo-t { margin-left: 8px; flex: 1; }
.vo-pin { width: 20px; height: 14px; flex: none; }
.vtext { position: absolute; left: 71px; top: 343px; writing-mode: vertical-rl; text-orientation: sideways; transform: rotate(180deg); color: #e6e6e6; font-size: 23.500px; line-height: 26px; letter-spacing: 2.400px; white-space: nowrap; }
.shop { position: absolute; left: 1266px; top: -8px; color: #d8103f; font-size: 30px; line-height: 44px; font-weight: 500; white-space: nowrap; }
.shop-l { font-family: "Liberation Sans", sans-serif; font-size: 32px; font-weight: 400; margin-left: 3px; letter-spacing: .8px; }
.part { position: absolute; left: 0; top: 0; width: 1481px; height: 852px; }
.blue { fill: #0f2f5e; }
.hole { fill: #1b5f55; stroke: #a9c9c0; stroke-width: .8; stroke-dasharray: 5 2; }
.ln { fill: none; stroke: #aabbd4; stroke-width: .9; }
.dash { fill: none; stroke: #aabbd4; stroke-width: .8; stroke-dasharray: 4 2; }
.edge { fill: none; stroke: #e7bd3d; stroke-width: 3; stroke-linejoin: round; }
.gring { fill: none; stroke: #1fb23a; stroke-width: 8; opacity: .92; }
.rring { fill: none; stroke: #c41230; stroke-width: 5; }
.rot { fill: none; stroke: #e6e6e6; stroke-width: 1.300; }
```
